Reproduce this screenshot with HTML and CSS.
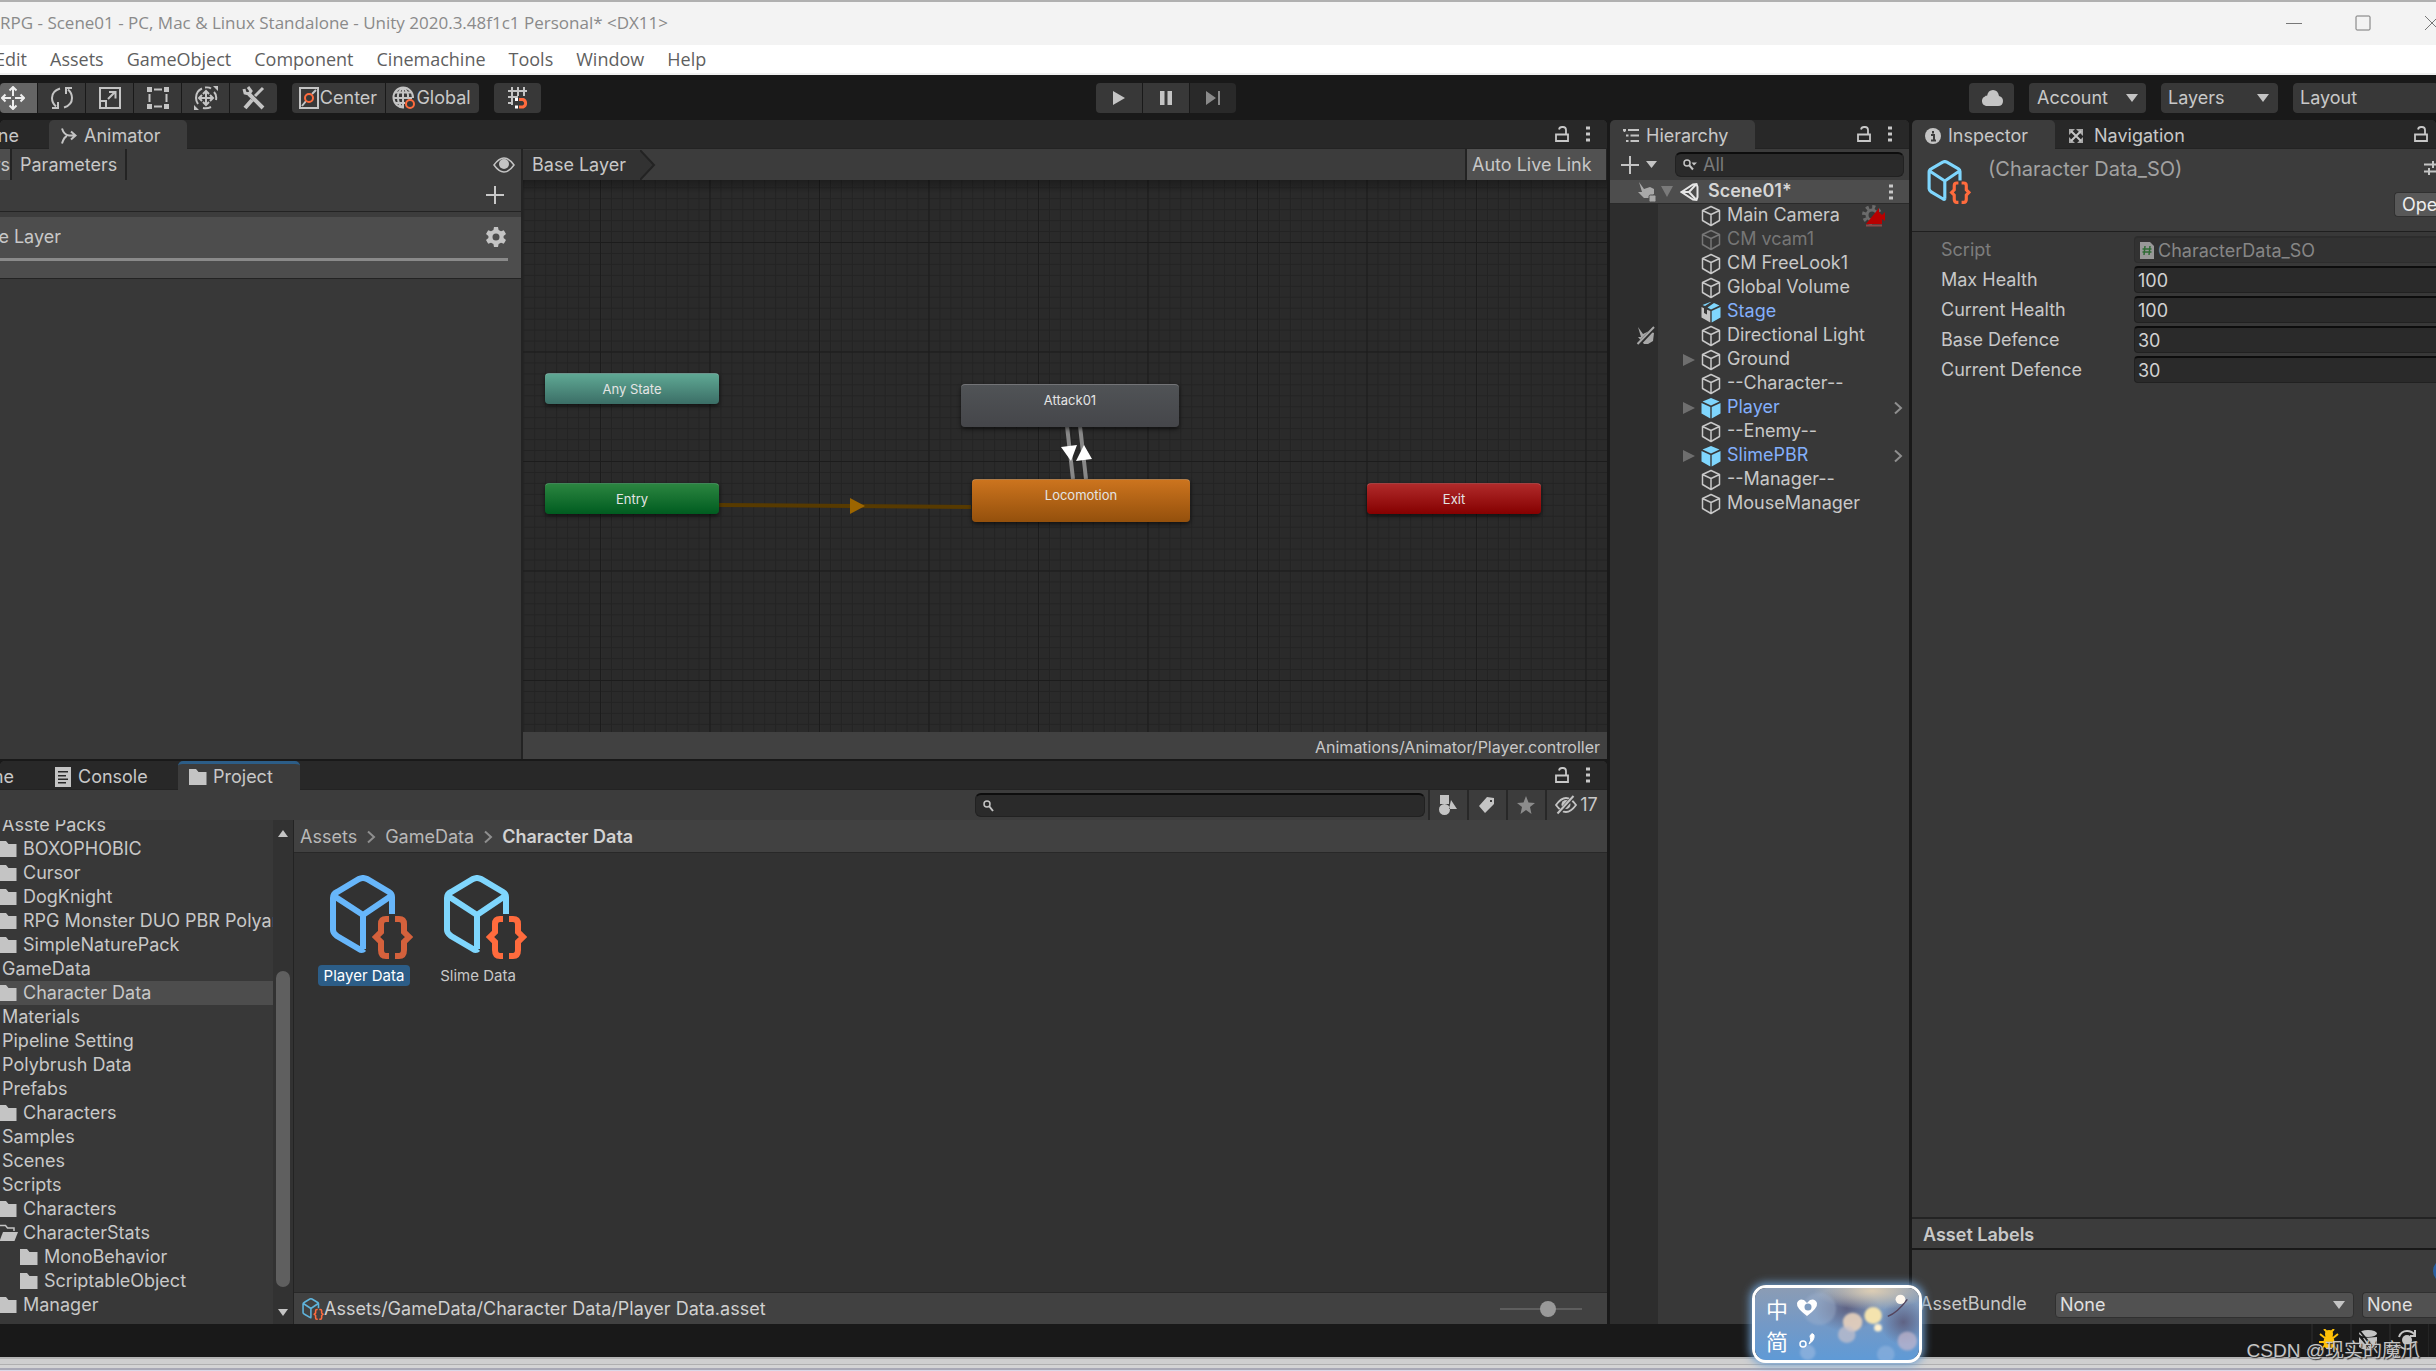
FILE: index.html
```html
<!DOCTYPE html>
<html lang="en">
<head>
<meta charset="utf-8">
<title>RPG - Scene01 - Unity</title>
<link rel="stylesheet" href="styles.css">
</head>
<body>
<svg class="sprite" width="0" height="0" aria-hidden="true">
  <symbol id="cube" viewBox="0 0 20 22"><path d="M10 1.500 18.500 5.500V15.500L10 20.500 1.500 15.500V5.500ZM1.500 5.500 10 9.500 18.500 5.500M10 9.500V20.500" fill="none" stroke="currentColor" stroke-width="1.500" stroke-linejoin="round"/></symbol>
  <symbol id="prefab" viewBox="0 0 20 22"><path d="M10 1 18.500 4.500 10 8.500 1.500 4.500ZM.5 6 9.300 10V21.500L.5 16.500ZM19.500 6 10.700 10V21.500L19.500 16.500Z" fill="#7fd6fd"/></symbol>
  <symbol id="model" viewBox="0 0 20 22"><path d="M.5 6 3 7.200V12L6 13.500V8.700L9.300 10V21.500L.5 16.500Z" fill="#c4c4c4"/><path d="M8 1.500 10.500 .8 4 5 1.500 4ZM13 2 18.500 4.500 10 8.500 6.500 6.500ZM19.500 6 10.700 10V21.500L19.500 16.500Z" fill="#7fd6fd"/></symbol>
  <symbol id="folder" viewBox="0 0 20 18"><path d="M1 1H8L10.500 4H18.500V17H1Z" fill="#c4c4c4"/></symbol>
  <symbol id="folder-open" viewBox="0 0 20 18"><path d="M1 16V1.500H7.500L9.500 4H16V7" fill="none" stroke="#c4c4c4" stroke-width="1.500"/><path d="M5 8H20L16.500 17H1.500Z" fill="#c4c4c4"/></symbol>
  <symbol id="lock" viewBox="0 0 16 18"><path d="M2 9.500H14V16H2ZM12 9V5Q12 2 9 2H8Q5.500 2 5 4.500" fill="none" stroke="currentColor" stroke-width="1.800"/></symbol>
  <symbol id="kebab" viewBox="0 0 6 18"><path d="M1 1.500H5V4.500H1ZM1 7.500H5V10.500H1ZM1 13.500H5V16.500H1Z" fill="currentColor"/></symbol>
  <symbol id="chevron" viewBox="0 0 10 14"><path d="M2 1.500 8 7 2 12.500" fill="none" stroke="#8f8f8f" stroke-width="2"/></symbol>
  <symbol id="plus" viewBox="0 0 20 20"><path d="M10 1V19M1 10H19" stroke="currentColor" stroke-width="2" fill="none"/></symbol>
  <symbol id="so" viewBox="0 0 84 84"><path d="M62 39V22Q62 19 59 17L37 4Q33 2 29 4L7 17Q3 19 3 23V55Q3 58 7 61L29 74Q32 76 34 74M4 21 33 40 61 21M33 40V74" transform="translate(1 0)" fill="none" stroke="currentColor" stroke-width="6"/><path d="M60 44H57Q52 44 52 49V57L47 62 52 67V75Q52 81 57 81H60M66 44H70Q75 44 75 49V57L80 62 75 67V75Q75 81 70 81H66" fill="none" stroke="var(--brace,#ff6b3d)" stroke-width="6"/></symbol>
</svg>

<header class="titlebar">
  <h1 class="title">RPG - Scene01 - PC, Mac &amp; Linux Standalone - Unity 2020.3.48f1c1 Personal* &lt;DX11&gt;</h1>
  <div class="winbtns">
    <button aria-label="Minimize"><svg width="16" height="16"><path d="M0 8.500H16" stroke="#777"/></svg></button>
    <button aria-label="Maximize"><svg width="16" height="16"><rect x="1" y="1" width="14" height="14" rx="1" fill="none" stroke="#777"/></svg></button>
    <button aria-label="Close"><svg width="16" height="16"><path d="M1 1 15 15M15 1 1 15" stroke="#777"/></svg></button>
  </div>
</header>
<nav class="menubar">
  <a href="#" class="cut">Edit</a><a href="#">Assets</a><a href="#">GameObject</a><a href="#">Component</a><a href="#">Cinemachine</a><a href="#">Tools</a><a href="#">Window</a><a href="#">Help</a>
</nav>

<div class="toolbar">
  <div class="tools">
    <div class="group">
      <button class="tool on first" aria-label="Move"><svg width="24" height="24" viewBox="0 0 24 24"><path d="M12 1V10M12 14V23M1 12H10M14 12H23M8.500 4.500 12 1 15.500 4.500M8.500 19.500 12 23 15.500 19.500M4.500 8.500 1 12 4.500 15.500M19.500 8.500 23 12 19.500 15.500"/></svg></button>
      <button class="tool" aria-label="Rotate"><svg width="24" height="24" viewBox="0 0 24 24"><path d="M10 2.500Q2 5 2 12Q2 17 6 20.500M2 22H8V16M14 21.500Q22 19 22 12Q22 7 18 3.500M22 2H16V8"/></svg></button>
      <button class="tool" aria-label="Scale"><svg width="24" height="24" viewBox="0 0 24 24"><path d="M2 2H22V22H2ZM2 15H8V22M10 13 17 6M11 6H17.500V12.500"/></svg></button>
      <button class="tool" aria-label="Rect"><svg width="24" height="24" viewBox="0 0 24 24"><path d="M8 3.500H16M8 20.500H16M3.500 8V16M20.500 8V16"/><path class="solid" d="M1 1H6V6H1ZM18 1H23V6H18ZM1 18H6V23H1ZM18 18H23V23H18Z"/></svg></button>
      <button class="tool" aria-label="Transform"><svg width="26" height="24" viewBox="0 0 26 24"><path d="M13 5V19M6 12H20M10 8 13 5 16 8M10 16 13 19 16 16M9 9 6 12 9 15M17 9 20 12 17 15M9 2.500Q3 5 3 12Q3 15 5 18M10 22Q14 23 18 21M23 14Q24 9 21 6M12 1.500Q16 1 18 2.500"/><path class="solid" d="M20 0H25V5ZM1 19V24H6Z"/></svg></button>
      <button class="tool last" aria-label="Custom tools"><svg width="24" height="24" viewBox="0 0 24 24"><path stroke-width="4" d="M7 8 21 22M10 14 3 22"/><path stroke-width="3" d="M21 2 13 10M2 3 3 7 7 8 9 5 6 1"/></svg></button>
    </div>
    <div class="group">
      <button class="tool text first"><svg width="22" height="24" viewBox="0 0 22 24"><path d="M2 2H20V22H2ZM4 20 8 15M14 8 18 4"/><circle cx="11" cy="12" r="4" class="hot"/></svg>Center</button>
      <button class="tool text last"><svg width="24" height="24" viewBox="0 0 24 24"><path d="M11 1.500A10 10 0 1 0 12 21.500M21 12A10 10 0 0 0 11 1.500M1 12H20M3 6.500H19M3 17H13M11 1.500Q5 6 6 12Q6 18 11 22M11 1.500Q17 6 16 12M11 1.500V21"/><circle cx="18" cy="18" r="4" class="hot"/></svg>Global</button>
    </div>
    <div class="group">
      <button class="tool first last" aria-label="Snap"><svg width="24" height="24" viewBox="0 0 24 24"><path d="M6 1V19M12 1V10M18 1V10M2 5H21M2 11H12M2 17H7"/><path d="M13 13.500H17A4 4 0 0 1 17 21H13" class="hot" stroke-width="3"/><path d="M9 13.500H12M9 21H12" stroke="#fff" stroke-width="3"/></svg></button>
    </div>
  </div>
  <div class="group play">
    <button class="tool first" aria-label="Play"><svg width="14" height="16"><path class="solid" d="M1 1 13 8 1 15Z"/></svg></button>
    <button class="tool" aria-label="Pause"><svg width="14" height="16"><path class="solid" d="M1 1H5.500V15H1ZM8.500 1H13V15H8.500Z"/></svg></button>
    <button class="tool last off" aria-label="Step" disabled><svg width="16" height="16"><path class="solid" d="M1 1 11 8 1 15ZM13 1H15V15H13Z"/></svg></button>
  </div>
  <div class="right">
    <button class="tool first last cloud" aria-label="Cloud"><svg width="22" height="18" viewBox="0 0 22 18"><path class="solid" d="M5 17A5 5 0 0 1 4 7.500Q5 6 6 7Q7 1 12 1Q17 1 18 7Q22 8 22 12Q22 17 17 17Z"/></svg></button>
    <button class="dd">Account</button>
    <span class="pick top"><select aria-label="Layers"><option>Layers</option></select></span>
    <span class="pick top end"><select aria-label="Layout"><option>Layout</option></select></span>
  </div>
</div>

<main class="work">
  <div class="left">
    <section class="panel animator">
      <div class="tabs">
        <button class="tab cut">Scene</button>
        <button class="tab on anim"><svg width="16" height="18"><path d="M1 1.500Q3 8 8 8.500H13M1 16.500Q3 10 6 9M10 4.500 14.500 8.500 10 12.500" fill="none" stroke="#c4c4c4" stroke-width="2"/></svg>Animator</button>
        <span class="tabend"><svg class="i-lock"><use href="#lock"/></svg><svg class="i-keb"><use href="#kebab"/></svg></span>
      </div>
      <div class="anibody">
        <aside class="layers">
          <div class="bar">
            <button class="seg cut on">Layers</button><button class="seg">Parameters</button>
            <svg class="eye" width="22" height="16" viewBox="0 0 22 16"><path d="M1 8Q6 1 11 1Q16 1 21 8Q16 15 11 15Q6 15 1 8Z" fill="none" stroke="#c4c4c4" stroke-width="1.500"/><circle cx="11" cy="7" r="5" fill="#c4c4c4"/></svg>
          </div>
          <div class="addrow"><button aria-label="Add layer"><svg width="20" height="20"><use href="#plus"/></svg></button></div>
          <div class="layer">
            <div class="layerhead"><span class="cut">Base Layer</span>
              <svg width="20" height="20" viewBox="0 0 20 20"><path d="M8 0H12L12.600 3 15 4.300 17.800 3.300 20 7 17.600 9V11L20 13 17.800 16.700 15 15.700 12.600 17 12 20H8L7.400 17 5 15.700 2.200 16.700 0 13 2.400 11V9L0 7 2.200 3.300 5 4.300 7.400 3ZM10 6.500A3.500 3.500 0 1 0 10 13.500A3.500 3.500 0 1 0 10 6.500Z" fill="#c4c4c4" fill-rule="evenodd"/></svg></div>
            <div class="weight"></div>
          </div>
        </aside>
        <div class="graphcol">
          <div class="bar crumbbar"><button class="basecrumb">Base Layer</button><svg class="tip" width="16" height="30"><path d="M0 0 14 15 0 30Z" fill="#323232"/><path d="M0 0 14 15 0 30" fill="none" stroke="#232323" stroke-width="2"/></svg><button class="live">Auto Live Link</button></div>
          <div class="canvas">
            <svg class="grid" width="100%" height="100%">
              <defs>
                <pattern id="minor" x="77" y="62" width="10.950" height="10.950" patternUnits="userSpaceOnUse"><path d="M.5 0V11M0 .5H11" stroke="#232323" fill="none"/></pattern>
                <pattern id="major" x="77" y="62" width="109.500" height="109.500" patternUnits="userSpaceOnUse"><path d="M.5 0V110M0 .5H110" stroke="#1c1c1c" fill="none"/></pattern>
                <linearGradient id="sh" x1="0" y1="0" x2="0" y2="1"><stop offset="0" stop-opacity=".3"/><stop offset="1" stop-opacity="0"/></linearGradient>
              </defs>
              <rect width="100%" height="100%" fill="url(#minor)"/><rect width="100%" height="100%" fill="url(#major)"/><rect width="100%" height="14" fill="url(#sh)"/>
              <path d="M196 325 448 327" stroke="#573a00" stroke-width="4"/><path d="M327 318V334L342 326Z" fill="#9c6500"/>
              <path d="M544 246 550 299M557 246 563 299" stroke="#888" stroke-width="4"/>
              <path d="M538 267 554 265 548 281ZM561 265 553 281 569 279Z" fill="#fff"/>
            </svg>
            <div class="node small any">Any State</div>
            <div class="node small entry">Entry</div>
            <div class="node small exit">Exit</div>
            <div class="node attack">Attack01</div>
            <div class="node loco">Locomotion</div>
          </div>
          <div class="graphfoot">Animations/Animator/Player.controller</div>
        </div>
      </div>
    </section>

    <section class="panel project">
      <div class="tabs">
        <button class="tab cut game">Game</button>
        <button class="tab con"><svg width="16" height="20"><path d="M0 0H16V20H0ZM3 4V5.500H13V4ZM3 8V9.500H11V8ZM3 11.500V13H13V11.500ZM3 15V16.500H11V15Z" fill="#c4c4c4" fill-rule="evenodd"/></svg>Console</button>
        <button class="tab on proj"><svg width="20" height="18"><use href="#folder"/></svg>Project</button>
        <span class="tabend"><svg class="i-lock"><use href="#lock"/></svg><svg class="i-keb"><use href="#kebab"/></svg></span>
      </div>
      <div class="pbar">
        <label class="search"><svg width="14" height="14"><circle cx="5" cy="5" r="3" fill="none" stroke="#c4c4c4" stroke-width="1.500"/><path d="M7 7 11 12" stroke="#c4c4c4" stroke-width="2"/></svg><input type="text" aria-label="Search assets"></label>
        <button aria-label="Filter by type"><svg width="20" height="22"><path d="M2 1H11V10H2ZM13 6 19 15H11ZM6.500 10A5.500 5.500 0 1 0 6.500 21A5.500 5.500 0 1 0 6.500 10Z" fill="#c4c4c4"/></svg></button>
        <button aria-label="Filter by label"><svg width="18" height="18"><path d="M9 1 16 2 16 8 7 17 1 10ZM12 4V6H14V4Z" fill="#c4c4c4" fill-rule="evenodd"/></svg></button>
        <button aria-label="Favourites"><svg width="18" height="18" viewBox="0 0 18 18"><path d="M9 0 11.500 6.500 18 7 13 11 14.500 18 9 14 3.500 18 5 11 0 7 6.500 6.500Z" fill="#8b8b8b"/></svg></button>
        <button class="hid"><svg width="22" height="20"><path d="M1 10Q6 3 11 3Q16 3 21 10Q16 17 11 17Q6 17 1 10Z" fill="none" stroke="#c4c4c4" stroke-width="1.800"/><circle cx="11" cy="9.500" r="4.500" fill="#c4c4c4"/><path d="M3 19 19 1" stroke="#3c3c3c" stroke-width="4"/><path d="M2.500 18.500 18.500 1" stroke="#c4c4c4" stroke-width="2"/></svg>17</button>
      </div>
      <div class="pbody">
        <ul class="tree">
          <li>Asste Packs</li>
          <li class="d1"><svg><use href="#folder"/></svg>BOXOPHOBIC</li>
          <li class="d1"><svg><use href="#folder"/></svg>Cursor</li>
          <li class="d1"><svg><use href="#folder"/></svg>DogKnight</li>
          <li class="d1"><svg><use href="#folder"/></svg>RPG Monster DUO PBR Polyart</li>
          <li class="d1"><svg><use href="#folder"/></svg>SimpleNaturePack</li>
          <li>GameData</li>
          <li class="d1 on"><svg><use href="#folder"/></svg>Character Data</li>
          <li>Materials</li>
          <li>Pipeline Setting</li>
          <li>Polybrush Data</li>
          <li>Prefabs</li>
          <li class="d1"><svg><use href="#folder"/></svg>Characters</li>
          <li>Samples</li>
          <li>Scenes</li>
          <li>Scripts</li>
          <li class="d1"><svg><use href="#folder"/></svg>Characters</li>
          <li class="d1"><svg><use href="#folder-open"/></svg>CharacterStats</li>
          <li class="d2"><svg><use href="#folder"/></svg>MonoBehavior</li>
          <li class="d2"><svg><use href="#folder"/></svg>ScriptableObject</li>
          <li class="d1"><svg><use href="#folder"/></svg>Manager</li>
        </ul>
        <div class="scroll"><i class="up"></i><span class="thumb"></span><i class="down"></i></div>
        <div class="assets">
          <nav class="crumbs"><a href="#">Assets</a><svg width="10" height="14"><use href="#chevron"/></svg><a href="#">GameData</a><svg width="10" height="14"><use href="#chevron"/></svg><b>Character Data</b></nav>
          <div class="tiles">
            <figure class="tile sel"><svg width="84" height="84"><use href="#so"/></svg><figcaption>Player Data</figcaption></figure>
            <figure class="tile"><svg width="84" height="84"><use href="#so"/></svg><figcaption>Slime Data</figcaption></figure>
          </div>
          <div class="pathbar"><svg width="22" height="22"><use href="#so"/></svg><span>Assets/GameData/Character Data/Player Data.asset</span><input type="range" aria-label="Icon size" min="0" max="100" value="60"></div>
        </div>
      </div>
    </section>
  </div>

  <section class="panel hier">
    <div class="tabs">
      <button class="tab on"><svg width="16" height="16"><path d="M0 2H3M5 2H16M3 7.500H5.500M7.500 7.500H16M3 13H5.500M7.500 13H16M1.500 2V4" stroke="#c4c4c4" stroke-width="1.800"/></svg>Hierarchy</button>
      <span class="tabend"><svg class="i-lock"><use href="#lock"/></svg><svg class="i-keb"><use href="#kebab"/></svg></span>
    </div>
    <div class="hbar">
      <button class="add" aria-label="Create"><svg width="20" height="20"><use href="#plus"/></svg><i class="tri"></i></button>
      <label class="search"><svg width="14" height="12"><circle cx="4" cy="4" r="3" fill="none" stroke="#c4c4c4" stroke-width="1.500"/><path d="M6 6 10 10.500" stroke="#c4c4c4" stroke-width="2"/><path d="M8.500 3.500H14L11 6.500Z" fill="#c4c4c4"/></svg><input type="text" placeholder="All" aria-label="Search hierarchy"></label>
    </div>
    <div class="scene">
      <svg class="hand" width="20" height="20" viewBox="0 0 20 20"><path d="M2 0 7 7 13 5 17 7V12L12 16H7L1 10L5 10Z" fill="#a8a8a8"/><rect x="12" y="13" width="7" height="7" rx="1.500" fill="#a8a8a8" stroke="#4d4d4d"/></svg>
      <i class="tri big"></i>
      <svg class="logo" width="20" height="20" viewBox="0 0 20 20"><path d="M1.500 10 13 2.500 16.500 2 17.500 5V15L16.500 18 13 17.500ZM9 10H2M9 10 15.500 3M9 10 15.500 17" fill="none" stroke="#e6e6e6" stroke-width="2"/></svg>
      <b>Scene01*</b>
      <svg class="i-keb"><use href="#kebab"/></svg>
    </div>
    <div class="hbody">
      <ul class="vis"><li></li><li></li><li></li><li></li><li></li><li><svg width="20" height="20" viewBox="0 0 20 20"><path d="M2 1 7 8 13 5 18 7 17 15 12 18H8L2 11L5 11Z" fill="#a8a8a8"/><path d="M2 19 19 1" stroke="#2d2d2d" stroke-width="4"/><path d="M1.500 18 18 1" stroke="#a8a8a8" stroke-width="2"/></svg></li></ul>
      <ul class="objs">
        <li><i></i><svg class="c"><use href="#cube"/></svg><span>Main Camera</span><svg class="cam" width="24" height="22" viewBox="0 0 24 22"><circle cx="10" cy="10" r="5" fill="none" stroke="#6b6b6b" stroke-width="3"/><circle cx="10" cy="10" r="8" fill="none" stroke="#6b6b6b" stroke-width="4" stroke-dasharray="3 3.280"/><path d="M4 19 17 3V7L20 10L23 7V16L20 14V19Z" fill="#b80000"/><path d="M4 20.500H20" stroke="#8a4a4a" stroke-width="2"/></svg></li>
        <li class="off"><i></i><svg class="c"><use href="#cube"/></svg><span>CM vcam1</span></li>
        <li><i></i><svg class="c"><use href="#cube"/></svg><span>CM FreeLook1</span></li>
        <li><i></i><svg class="c"><use href="#cube"/></svg><span>Global Volume</span></li>
        <li class="pf"><i></i><svg class="c"><use href="#model"/></svg><span>Stage</span></li>
        <li><i></i><svg class="c"><use href="#cube"/></svg><span>Directional Light</span></li>
        <li><i class="fold"></i><svg class="c"><use href="#cube"/></svg><span>Ground</span></li>
        <li><i></i><svg class="c"><use href="#cube"/></svg><span>--Character--</span></li>
        <li class="pf"><i class="fold"></i><svg class="c"><use href="#prefab"/></svg><span>Player</span><svg class="go"><use href="#chevron"/></svg></li>
        <li><i></i><svg class="c"><use href="#cube"/></svg><span>--Enemy--</span></li>
        <li class="pf"><i class="fold"></i><svg class="c"><use href="#prefab"/></svg><span>SlimePBR</span><svg class="go"><use href="#chevron"/></svg></li>
        <li><i></i><svg class="c"><use href="#cube"/></svg><span>--Manager--</span></li>
        <li><i></i><svg class="c"><use href="#cube"/></svg><span>MouseManager</span></li>
      </ul>
    </div>
  </section>

  <section class="panel insp">
    <div class="tabs">
      <button class="tab on"><svg width="16" height="16"><circle cx="8" cy="8" r="8" fill="#c4c4c4"/><path d="M6 7H9V12M6 12.500H11M8 3V5.500" stroke="#3c3c3c" stroke-width="2" fill="none"/></svg>Inspector</button>
      <button class="tab nav"><svg width="16" height="16"><path d="M1 1H7L1 7ZM15 1V8L8 1ZM15 15H9L15 9ZM1 15V9L7 15Z" fill="#a8a8a8"/><path d="M3 13 13 3M3 3 13 13" stroke="#c4c4c4" stroke-width="2"/></svg>Navigation</button>
      <span class="tabend"><svg class="i-lock"><use href="#lock"/></svg></span>
    </div>
    <div class="ihead">
      <svg class="bigso" width="44" height="44"><use href="#so"/></svg>
      <h2>(Character Data_SO)</h2>
      <div class="iact">
        <svg width="12" height="16"><path d="M0 4.500H12M0 11.500H12M9 1V8M5 8V15" stroke="#c4c4c4" stroke-width="2"/></svg>
        <button class="open">Open</button>
      </div>
    </div>
    <form class="props">
      <label for="f0" class="dim">Script</label><div class="obj"><svg width="14" height="17"><path d="M0 0H10L14 4V17H0Z" fill="#989898"/><path d="M5 4 4 13M10 4 9 13M2.500 7H11.500M2.500 10H11.500" stroke="#2f6b35" stroke-width="1.500"/></svg><input id="f0" value="CharacterData_SO" disabled></div>
      <label for="f1">Max Health</label><input id="f1" value="100">
      <label for="f2">Current Health</label><input id="f2" value="100">
      <label for="f3">Base Defence</label><input id="f3" value="30">
      <label for="f4">Current Defence</label><input id="f4" value="30">
    </form>
    <h3 class="alabels">Asset Labels</h3>
    <div class="bundle">
      <div class="dotrow"><span class="dot"></span></div>
      <div class="brow">
        <label for="ab">AssetBundle</label>
        <span class="pick b1"><select id="ab"><option>None</option></select></span>
        <span class="pick b2"><select aria-label="Variant"><option>None</option></select></span>
      </div>
    </div>
  </section>
</main>

<footer class="status">
  <span class="cell"><svg width="20" height="22" viewBox="0 0 20 22"><ellipse cx="10" cy="13" rx="5.500" ry="7.500" fill="#ffc107"/><circle cx="10" cy="5" r="4" fill="#ffc107"/><path d="M5 0 8 3M15 0 12 3M1 5 6 9M19 5 14 9M0 13H20M2 21 6 16M18 21 14 16" stroke="#ffc107" stroke-width="2"/></svg></span>
  <span class="cell"><svg width="20" height="22" viewBox="0 0 20 22"><ellipse cx="10" cy="4.500" rx="9" ry="3.500" fill="#c4c4c4"/><path d="M5 9 19 8V18Q16 21 12 21ZM1 8 12 21Q4 21 1 18Z" fill="#c4c4c4"/><path d="M1 1 17 21" stroke="#191919" stroke-width="2"/></svg></span>
  <span class="cell"><svg width="20" height="22" viewBox="0 0 20 22"><circle cx="10" cy="11" r="5" fill="#c4c4c4"/><path d="M2 8Q4 2 10 2Q15 2 18 6M18 1V7H13M18 14Q16 20 10 20Q5 20 2 16" fill="none" stroke="#c4c4c4" stroke-width="2"/></svg></span>
</footer>
<div class="desk"></div>

<div class="ime">
  <svg class="imebg" width="100%" height="100%" viewBox="0 0 168 76" preserveAspectRatio="none">
    <defs>
      <linearGradient id="sky" x1="0" y1="0" x2="0" y2="1"><stop offset="0" stop-color="#8b9cb4"/><stop offset=".5" stop-color="#7499c6"/><stop offset="1" stop-color="#5f9ad6"/></linearGradient>
      <radialGradient id="warm"><stop offset="0" stop-color="#dccdb4"/><stop offset="1" stop-color="#dccdb4" stop-opacity="0"/></radialGradient>
      <radialGradient id="dark"><stop offset="0" stop-color="#5f6384"/><stop offset="1" stop-color="#5f6384" stop-opacity="0"/></radialGradient>
      <filter id="soft"><feGaussianBlur stdDeviation="1"/></filter>
    </defs>
    <rect width="168" height="76" fill="url(#sky)"/>
    <ellipse cx="94" cy="22" rx="34" ry="24" fill="url(#dark)"/><ellipse cx="152" cy="36" rx="24" ry="24" fill="url(#dark)"/><ellipse cx="120" cy="3" rx="60" ry="20" fill="url(#warm)"/>
    <g filter="url(#soft)"><circle cx="66" cy="22" r="17" fill="#9fb2cc" opacity=".4"/><circle cx="100" cy="36" r="10" fill="#e8d2bc" opacity=".9"/><circle cx="121" cy="29" r="9" fill="#f4e3ae"/><circle cx="126" cy="42" r="4" fill="#fff1cf"/><circle cx="94" cy="49" r="9" fill="#c6c2cc" opacity=".7"/><circle cx="156" cy="56" r="10" fill="#c5b6cc" opacity=".7"/><circle cx="54" cy="68" r="8" fill="#a8c0e4" opacity=".5"/><circle cx="134" cy="70" r="9" fill="#a8c0e4" opacity=".4"/></g>
    <path d="M136 30Q146 26 156 12" stroke="#54445c" stroke-width="1.500" fill="none"/><circle cx="149" cy="12" r="5" fill="#fff8ee"/>
  </svg>
  <span>中</span><svg width="22" height="20"><path d="M11 18Q0 10 1 5Q3 0 8 2L11 5 14 2Q19 0 21 5Q22 10 11 18Z" fill="#fff"/><circle cx="12" cy="9" r="3.500" fill="#7f9cc0"/></svg>
  <span>简</span><svg width="22" height="20"><circle cx="7" cy="14" r="3" fill="none" stroke="#fff" stroke-width="1.500"/><path d="M14 6Q16 2 18 5Q19 10 13 14Q16 10 14 6Z" fill="#fff" stroke="#fff"/></svg>
</div>
<div class="credit">CSDN @现实的魔爪</div>
</body>
</html>
```
FILE: styles.css
```css
* { box-sizing: border-box; }
html, body { margin: 0; height: 100%; }
body {
  display: flex; flex-direction: column; position: relative; min-height: 100vh; overflow: hidden;
  background: #191919; color: #c8c8c8;
  font: 18px/24px Inter, "Liberation Sans", sans-serif;
}
button, input, select { font: inherit; color: inherit; border: 0; margin: 0; padding: 0; background: none; border-radius: 0; outline: 0; }
button { display: flex; align-items: center; white-space: nowrap; }
select { appearance: none; }
ul { list-style: none; margin: 0; padding: 0; }
h1, h2, h3, figure { margin: 0; font-weight: 400; font-size: inherit; }
a { color: inherit; text-decoration: none; }
svg { flex: none; display: block; }
.sprite { position: absolute; }
.cut { display: flex; justify-content: flex-end; overflow: hidden; white-space: nowrap; }

/* window frame */
.titlebar { height: 45px; flex: none; display: flex; justify-content: space-between; align-items: center; padding-bottom: 2px; background: #f3f3f3; border-top: 2px solid #b0b0b0; overflow: hidden; }
.title { color: #8a8a8a; font: 17px/24px "Open Sans", "Noto Sans", sans-serif; white-space: nowrap; }
.winbtns { display: flex; gap: 53px; margin-right: -4px; }
.menubar { height: 30px; flex: none; display: flex; align-items: center; gap: 23px; background: #fff; border-bottom: 2px solid #f0f0f0; color: #5f5f5f; font: 18px/24px "Open Sans", "Noto Sans", sans-serif; }
.menubar .cut { width: 27px; }

/* main toolbar */
.toolbar { height: 45px; flex: none; display: grid; grid-template-columns: 1096px auto 1fr; align-items: center; padding-top: 1px; }
.tools { display: flex; gap: 15px; }
.group { display: flex; gap: 1px; }
.tool { width: 47px; height: 30px; justify-content: center; background: #383838; }
.play .tool { width: 46px; }
.tool svg { fill: none; stroke: #c4c4c4; stroke-width: 2; }
.tool .solid { fill: #c4c4c4; stroke: none; }
.tool .hot { fill: none; stroke: #ff6b3d; }
.tools .on { background: #656565; width: 37px; padding-right: 18px; justify-content: flex-end; }
.tool.on svg { stroke: #eee; margin-right: -6px; }
.tool.text { width: 93px; padding-right: 2px; }
.first { border-radius: 4px 0 0 4px; }
.last { border-radius: 0 4px 4px 0; }
.first.last { border-radius: 4px; }
.off .solid { fill: #8a8a8a; }
.tool.off { background: #292929; }
.right { display: flex; justify-content: flex-end; gap: 15px; overflow: hidden; }
.right .cloud { width: 45px; }
.dd { width: 117px; height: 30px; padding: 0 8px; justify-content: space-between; background: #383838; border-radius: 4px; }
.dd::after, .pick::after, .tri { content: ""; width: 12px; height: 8px; background: #c4c4c4; clip-path: polygon(0 0, 100% 0, 50% 100%); flex: none; }
.pick { display: flex; align-items: center; padding-right: 8px; background: #515151; border: 1px solid #303030; border-radius: 4px; color: #e0e0e0; }
.pick select { flex: 1; min-width: 0; padding-left: 4px; }
.pick.top { width: 117px; height: 30px; background: #383838; border-color: #383838; color: #c8c8c8; }
.pick.top select { padding-left: 6px; }
.pick.end { width: 143px; border-radius: 4px 0 0 4px; }
.pick.end::after, .pick.b2::after { content: none; }

/* docked panels */
.work { flex: 1; min-height: 0; display: grid; grid-template-columns: minmax(0, 1fr) 299px 524px; gap: 3px; }
.left { display: grid; grid-template-rows: minmax(0, 1fr) 563px; gap: 2px; min-height: 0; }
.panel { display: flex; flex-direction: column; min-height: 0; min-width: 0; background: #383838; border-radius: 5px 5px 0 0; overflow: hidden; }
.tabs { height: 29px; flex: none; display: flex; background: #282828; border-bottom: 1px solid #232323; }
.tab { height: 29px; gap: 7px; padding: 2px 27px 0 13px; }
.tab.on { background: #3c3c3c; border-radius: 5px 5px 0 0; }
.tab.cut { width: 49px; padding: 2px 30px 0 0; }
.tab.cut.game { width: 42px; padding-right: 28px; }
.tab.anim { width: 138px; padding-left: 12px; }
.tab.con { width: 136px; }
.tab.proj { width: 122px; padding: 0 0 0 10px; gap: 5px; border-top: 3px solid #2c5d87; }
.tab.nav { gap: 10px; }
.tabend { margin-left: auto; display: flex; align-items: center; gap: 15px; padding-right: 16px; }
.insp .tabend { padding-right: 7px; }
.i-lock { width: 16px; height: 18px; }
.i-keb { width: 6px; height: 18px; }

/* animator */
.anibody { flex: 1; display: flex; min-height: 0; }
.layers { width: 523px; flex: none; border-right: 2px solid #232323; }
.bar { height: 31px; display: flex; align-items: center; background: #3c3c3c; }
.seg { height: 31px; padding: 0 8px; border-right: 2px solid #232323; }
.seg.cut { width: 12px; padding: 0 6px 0 0; padding: 0; background: #4d4d4d; }
.eye { margin-left: auto; margin-right: 6px; }
.addrow { height: 32px; display: flex; justify-content: flex-end; padding: 0 16px 2px 0; background: #3c3c3c; border-bottom: 1px solid #232323; }
.layer { height: 67px; border-top: 5px solid #3c3c3c; background: #4d4d4d; border-bottom: 1px solid #232323; }
.layerhead { height: 41px; display: flex; align-items: center; justify-content: space-between; padding: 0 15px 2px 0; }
.layerhead .cut { width: 61px; }
.weight { height: 3px; margin-right: 13px; background: #8a8a8a; }
.graphcol { flex: 1; min-width: 0; display: flex; flex-direction: column; }
.crumbbar { flex: none; }
.basecrumb { height: 30px; padding: 0 9px; background: #323232; width: 117px; }
.live { margin-left: auto; height: 31px; width: 142px; padding: 0 0 0 5px; background: #515151; border-left: 2px solid #232323; border-right: 1px solid #232323; }
.canvas { flex: 1; position: relative; background: #2a2a2a; overflow: hidden; }
.grid { position: absolute; inset: 0; }
.node { position: absolute; display: flex; justify-content: center; width: 218px; height: 43px; padding-top: 3px; border-radius: 4px; font-size: 13px; color: #e4e4e4; border-top: 1px solid rgba(255,255,255,.25); box-shadow: 0 2px 4px rgba(0,0,0,.6); }
.node.small { width: 174px; height: 31px; }
.any { left: 22px; top: 193px; background: linear-gradient(#5fa894, #3b6e66); }
.entry { left: 22px; top: 303px; background: linear-gradient(#2b8540, #005c20); }
.exit { left: 844px; top: 303px; background: linear-gradient(#b02a2a, #850000); }
.attack { left: 438px; top: 204px; background: linear-gradient(#505356, #45464a); }
.loco { left: 449px; top: 299px; background: linear-gradient(#cc741e, #94500c); }
.graphfoot { height: 27px; flex: none; display: flex; justify-content: flex-end; align-items: center; padding: 3px 7px 0 0; background: #414141; font-size: 16px; }

/* project */
.pbar { height: 30px; flex: none; display: flex; justify-content: flex-end; align-items: center; background: #3c3c3c; }
.pbar button { width: 39px; height: 30px; justify-content: center; padding-right: 1px; border-left: 2px solid #282828; }
.pbar .hid { width: 62px; gap: 3px; }
.search { display: flex; align-items: center; gap: 6px; height: 24px; padding-left: 7px; background: #2a2a2a; border: 1px solid #212121; border-top: 2px solid #0d0d0d; border-radius: 6px; }
.search input { flex: 1; min-width: 0; width: 0; height: 21px; }
.search input::placeholder { color: #7a7a7a; opacity: 1; }
.pbar .search { width: 450px; margin-right: 3px; padding-left: 6px; }
.pbody { flex: 1; min-height: 0; display: flex; }
.tree { width: 273px; flex: none; overflow: hidden; }
.tree li { height: 24px; display: flex; align-items: center; gap: 5px; padding-left: 2px; white-space: nowrap; }
.tree li:first-child { height: 17px; align-items: flex-end; }
.tree svg { width: 20px; height: 18px; }
.tree .d1 svg { margin-left: -4px; }
.tree .d2 { padding-left: 19px; }
.tree .on { background: #4d4d4d; }
.scroll { width: 21px; flex: none; display: grid; grid-template-rows: 27px 124px 316px 1fr; justify-items: center; background: #323232; border-right: 1px solid #232323; }
.up, .down { width: 10px; height: 7px; background: #c4c4c4; clip-path: polygon(50% 0, 100% 100%, 0 100%); grid-row: 1; align-self: center; }
.down { clip-path: polygon(0 0, 100% 0, 50% 100%); grid-row: 4; margin-top: 14px; }
.thumb { width: 14px; grid-row: 3; background: #5f5f5f; border-radius: 7px; }
.assets { flex: 1; min-width: 0; display: flex; flex-direction: column; background: #323232; }
.crumbs { height: 33px; flex: none; display: flex; align-items: center; gap: 9px; padding: 1px 0 0 6px; background: #414141; border-bottom: 1px solid #282828; color: #b8b8b8; }
.crumbs b { color: #d2d2d2; font-weight: 600; }
.tiles { flex: 1; display: flex; padding: 22px 0 0 13px; }
.tile { width: 114px; display: flex; flex-direction: column; align-items: center; color: #7fd6fd; }
.tile svg { margin-left: 13px; }
.tile figcaption { margin-top: 6px; padding: 0 6px; font-size: 15px; line-height: 21px; border-radius: 4px; color: #c8c8c8; white-space: nowrap; }
.sel { color: #67b6fa; --brace: #d4613c; }
.sel figcaption { background: #2c5d87; color: #fff; }
.pathbar { height: 32px; flex: none; display: flex; align-items: center; padding: 0 25px 0 8px; background: #414141; border-top: 1px solid #282828; color: #d0d0d0; }
.pathbar svg { color: #5fb4dc; }
.pathbar input { appearance: none; width: 82px; height: 16px; margin-left: auto; background: linear-gradient(#5e5e5e, #5e5e5e) center / 100% 2px no-repeat; }
.pathbar input::-webkit-slider-thumb { appearance: none; width: 16px; height: 16px; border-radius: 8px; background: #999; }

/* hierarchy */
.hbar { height: 31px; flex: none; display: flex; align-items: center; gap: 18px; padding: 0 5px 0 10px; background: #3c3c3c; }
.add { gap: 6px; width: 37px; }
.add .tri { width: 11px; height: 7px; }
.hbar .search { flex: 1; height: 25px; }
.hbar svg { color: #c4c4c4; }
.scene { height: 24px; flex: none; display: flex; align-items: center; padding: 0 15px 0 27px; background: #4d4d4d; border-bottom: 1px solid #2a2a2a; }
.scene b { font-weight: 600; margin-left: 8px; color: #d6d6d6; line-height: 22px; padding-bottom: 2px; }
.scene .i-keb { margin-left: auto; }
.scene .big { height: 11px; margin: 0 7px 0 4px; background: #7a7a7a; }
.hbody { flex: 1; display: flex; min-height: 0; }
.vis { width: 48px; background: #2d2d2d; }
.vis li { height: 24px; padding: 2px 0 0 26px; }
.objs { flex: 1; }
.objs li { height: 24px; display: flex; align-items: center; padding: 0 6px 0 25px; color: #c8c8c8; white-space: nowrap; }
.objs span { padding-bottom: 2px; line-height: 22px; }
.objs i { width: 18px; height: 12px; flex: none; }
.fold { background: #6e6e6e; clip-path: polygon(0 0, 12px 50%, 0 100%); }
.c { width: 20px; height: 22px; margin-right: 6px; }
.objs .off { color: #767676; }
.objs .pf { color: #83affb; }
.cam { margin-left: 22px; }
.go { width: 10px; height: 14px; margin-left: auto; }

/* inspector */
.ihead { height: 83px; flex: none; display: flex; padding: 11px 0 0 15px; background: #3c3c3c; border-bottom: 1px solid #1f1f1f; color: #7fd6fd; }
.ihead h2 { margin-left: 17px; margin-top: -3px; color: #a2a2a2; font-size: 20px; }
.iact { margin-left: auto; display: flex; flex-direction: column; align-items: flex-end; gap: 16px; }
.open { width: 42px; height: 25px; padding-left: 7px; background: #585858; border: 1px solid #303030; border-right: 0; border-radius: 4px 0 0 4px; color: #eee; overflow: hidden; }
.props { display: grid; grid-template-columns: 193px 1fr; row-gap: 3px; padding: 4px 0 0 29px; flex: 1; align-content: start; line-height: 27px; }
.props > input, .obj { width: 100%; height: 27px; padding-left: 3px; background: #2a2a2a; border: 1px solid #212121; border-top: 2px solid #0d0d0d; border-right: 0; border-radius: 4px 0 0 4px; color: #d2d2d2; }
.props .obj { display: flex; align-items: center; gap: 4px; padding-left: 5px; background: #323232; border-color: #2d2d2d; }
.obj input { flex: 1; min-width: 0; color: #868686; }
.props .dim { color: #7d7d7d; }
.alabels { height: 33px; flex: none; line-height: 31px; padding-left: 11px; font-weight: 600; background: #3c3c3c; border-top: 2px solid #232323; border-bottom: 2px solid #191919; }
.bundle { height: 74px; flex: none; background: #3c3c3c; }
.dotrow { height: 42px; display: flex; justify-content: flex-end; align-items: center; overflow: hidden; }
.dot { width: 24px; height: 24px; margin-right: -21px; flex: none; border-radius: 12px; background: #2a5ea0; }
.brow { display: flex; gap: 8px; padding-left: 8px; }
.brow label { width: 127px; }
.brow .pick { height: 26px; }
.b1 { flex: 1; }
.b2 { width: 74px; border-radius: 4px 0 0 4px; border-right: 0; }

/* footer */
.status { height: 33px; flex: none; display: flex; justify-content: flex-end; padding-right: 7px; }
.cell { width: 39px; display: flex; align-items: center; padding: 0 0 2px 6px; border-left: 2px solid #242424; }
.cell:last-child { width: 40px; border-right: 1px solid #242424; }
.desk { height: 14px; flex: none; background: linear-gradient(#b4b4b4 2px, #cfcfcf 2px 7px, #b0b0b0 7px 8px, #d4d4d4 8px 11px, #a9a9b6 11px 13px, #dcd8e8 13px); }

.ime { position: absolute; left: 1752px; bottom: 8px; width: 170px; height: 78px; display: grid; grid-template-columns: 30px 26px; grid-template-rows: 32px 32px; align-items: center; align-content: center; padding-left: 11px; border: 3px solid #fff; border-radius: 14px; box-shadow: 0 0 8px 2px #6f9fd0; overflow: hidden; color: #fff; font: 22px/30px "Noto Sans CJK SC", sans-serif; }
.imebg { position: absolute; inset: 0; }
.ime > span, .ime > svg:not(.imebg) { position: relative; }
.credit { position: absolute; right: 16px; bottom: 6px; color: #c6c6c6; font: 19px/28px "Liberation Sans", "Noto Sans CJK SC", sans-serif; text-shadow: 1px 1px 1px #333; white-space: nowrap; }
```
